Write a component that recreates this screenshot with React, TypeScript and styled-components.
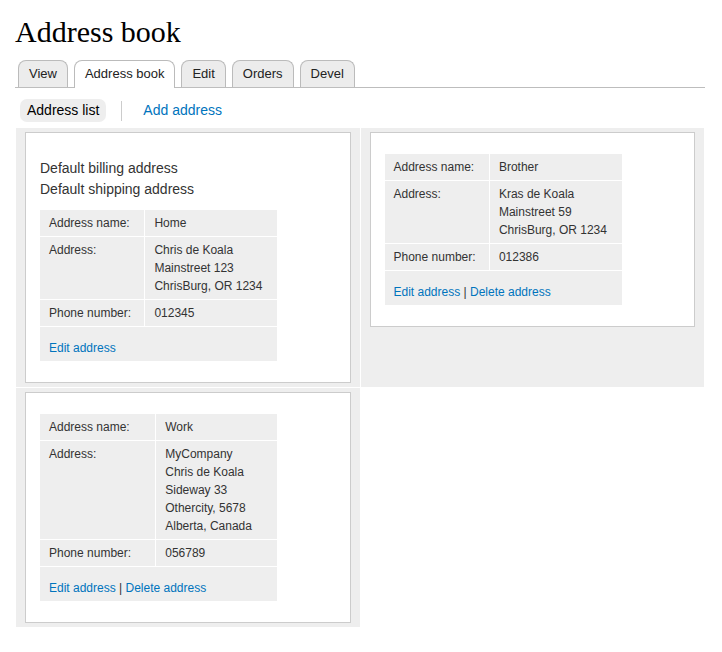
import React from "react";
import styled, { createGlobalStyle } from "styled-components";

type Address = {
  name: string;
  lines: string[];
  phone: string;
  defaults?: string[];
  canDelete: boolean;
};

const addresses: Address[] = [
  {
    name: "Home",
    lines: ["Chris de Koala", "Mainstreet 123", "ChrisBurg, OR 1234"],
    phone: "012345",
    defaults: ["Default billing address", "Default shipping address"],
    canDelete: false,
  },
  {
    name: "Brother",
    lines: ["Kras de Koala", "Mainstreet 59", "ChrisBurg, OR 1234"],
    phone: "012386",
    canDelete: true,
  },
  {
    name: "Work",
    lines: [
      "MyCompany",
      "Chris de Koala",
      "Sideway 33",
      "Othercity, 5678",
      "Alberta, Canada",
    ],
    phone: "056789",
    canDelete: true,
  },
];

const tabs = ["View", "Address book", "Edit", "Orders", "Devel"];

const App: React.FC = () => {
  return (
    <Page>
      <GlobalStyle />
      <Title>Address book</Title>
      <TabBar>
        {tabs.map((tab) => (
          <Tab key={tab} $active={tab === "Address book"}>
            {tab}
          </Tab>
        ))}
      </TabBar>
      <SubNav>
        <SubItem $side="right">
          <SubLink $active>Address list</SubLink>
        </SubItem>
        <Divider />
        <SubItem $side="left">
          <SubLink href="#">Add address</SubLink>
        </SubItem>
      </SubNav>
      <Grid>
        {addresses.map((address) => (
          <Cell key={address.name}>
            <Card>
              {address.defaults && (
                <Defaults>
                  {address.defaults.map((d) => (
                    <div key={d}>{d}</div>
                  ))}
                </Defaults>
              )}
              <Details>
                <tbody>
                  <tr>
                    <Label>Address name:</Label>
                    <Value>{address.name}</Value>
                  </tr>
                  <tr>
                    <Label>Address:</Label>
                    <Value>
                      {address.lines.map((line) => (
                        <div key={line}>{line}</div>
                      ))}
                    </Value>
                  </tr>
                  <tr>
                    <Label>Phone number:</Label>
                    <Value>{address.phone}</Value>
                  </tr>
                  <tr>
                    <Actions colSpan={2}>
                      <a href="#">Edit address</a>
                      {address.canDelete && (
                        <>
                          {" | "}
                          <a href="#">Delete address</a>
                        </>
                      )}
                    </Actions>
                  </tr>
                </tbody>
              </Details>
            </Card>
          </Cell>
        ))}
      </Grid>
    </Page>
  );
};

const GlobalStyle = createGlobalStyle`
  body {
    margin: 0;
    background: #fff;
    font-family: "Liberation Sans", Arial, sans-serif;
    color: #333;
  }
`;

const Page = styled.div`
  padding: 0 17px 20px 15px;
`;

const Title = styled.h1`
  margin: 14px 0 0;
  font-family: "Liberation Serif", Georgia, serif;
  font-weight: normal;
  font-size: 30px;
  line-height: 36px;
  color: #000;
`;

const TabBar = styled.ul`
  display: flex;
  align-items: flex-end;
  gap: 6px;
  list-style: none;
  margin: 10px 0 0;
  padding: 0 0 0 3px;
  height: 27px;
  border-bottom: 1px solid #bdbdbd;
`;

const Tab = styled.li<{ $active?: boolean }>`
  box-sizing: border-box;
  height: ${(p) => (p.$active ? "28px" : "27px")};
  margin-bottom: ${(p) => (p.$active ? "-1px" : "0")};
  padding: 0 10px;
  border: 1px solid #bbb;
  border-bottom: none;
  border-radius: 8px 8px 0 0;
  background: ${(p) => (p.$active ? "#fff" : "#ececec")};
  font-size: 13px;
  line-height: 25px;
  color: #222;
`;

const SubNav = styled.ul`
  display: flex;
  align-items: center;
  list-style: none;
  margin: 11px 0 0;
  padding: 0 0 0 5px;
`;

const SubItem = styled.li<{ $side: "left" | "right" }>`
  padding-${(p) => p.$side}: 14px;
`;

const Divider = styled.li`
  width: 1px;
  height: 20px;
  margin-left: 1px;
  background: #ccc;
`;

const SubLink = styled.a<{ $active?: boolean }>`
  display: block;
  padding: 3px 7px;
  border-radius: 7px;
  font-size: 14px;
  line-height: 17px;
  text-decoration: none;
  color: ${(p) => (p.$active ? "#000" : "#0074bd")};
  background: ${(p) => (p.$active ? "#eee" : "transparent")};
`;

const Grid = styled.div`
  display: grid;
  grid-template-columns: 1fr 1fr;
  gap: 1px;
  margin: 6px 0 0 1px;
  width: 688px;
`;

const Cell = styled.div`
  background: #eee;
  padding: 4px 9px;
`;

const Card = styled.div`
  background: #fff;
  border: 1px solid #ccc;
  padding: 21px 14px;
`;

const Defaults = styled.div`
  margin: 4px 0 10px;
  font-size: 14px;
  line-height: 21px;
  color: #333;
`;

const Details = styled.table`
  width: 237px;
  border-collapse: separate;
  border-spacing: 0;
  font-size: 12px;
  line-height: 18px;
  color: #333;

  td {
    background: #eee;
    vertical-align: top;
  }

  td + td {
    border-left: 1px solid #fff;
  }

  tr + tr td {
    border-top: 1px solid #fff;
  }

  a {
    color: #0074bd;
    text-decoration: none;
  }
`;

const Label = styled.td`
  padding: 4px 9px;
  white-space: nowrap;
`;

const Value = styled.td`
  padding: 4px 9px;
  white-space: nowrap;
`;

const Actions = styled.td`
  padding: 12px 9px 4px;
`;

export default App;
